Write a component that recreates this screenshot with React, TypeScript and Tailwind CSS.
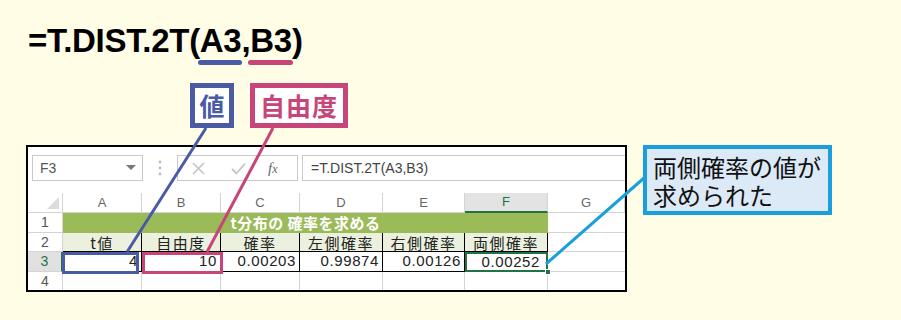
import React from "react";

const cols = ["A", "B", "C", "D", "E", "F", "G"];
const heads = ["t値", "自由度", "確率", "左側確率", "右側確率", "両側確率"];
const vals = ["4", "10", "0.00203", "0.99874", "0.00126", "0.00252"];

export default function App() {
  const jp = { fontFamily: '"Noto Sans CJK JP", "Noto Sans", sans-serif' };
  const cellFont = { fontFamily: '"Liberation Sans", "Noto Sans CJK JP", sans-serif' };
  return (
    <div
      className="relative w-[901px] h-[320px] overflow-hidden bg-[#fffde6]"
      style={{ fontFamily: '"Liberation Sans", "Noto Sans CJK JP", sans-serif' }}
    >
      {/* Title formula */}
      <div className="pl-[28px] pt-[23px] h-[58px] text-[33px] leading-[36px] font-bold text-black tracking-[-0.3px]">
        =T.DIST.2T(
        <span className="relative">
          A3
          <span className="absolute left-[-2px] right-[-1px] bottom-[-6px] h-[5px] rounded-full bg-[#4a5aa5]" />
        </span>
        ,
        <span className="relative">
          B3
          <span className="absolute left-[-2px] right-[-1px] bottom-[-6px] h-[5px] rounded-full bg-[#c8457a]" />
        </span>
        )
      </div>

      {/* Label boxes */}
      <div className="flex mt-[25px] ml-[190px] gap-[16px] h-[45px]" style={jp}>
        <div className="w-[44px] h-[45px] border-[5px] border-[#4a5aa5] bg-white flex items-center justify-center text-[25px] font-bold text-[#4a5aa5] leading-none">
          値
        </div>
        <div className="w-[98px] h-[45px] border-[5px] border-[#c8457a] bg-white flex items-center justify-center text-[25px] font-bold text-[#c8457a] leading-none tracking-[1px]">
          自由度
        </div>
      </div>

      {/* Spreadsheet + callout row */}
      <div className="flex mt-[17px] items-start">
        <div className="ml-[26px] w-[601px] h-[147px] border-2 border-black bg-white flex flex-col">
          {/* toolbar */}
          <div className="h-[46px] flex items-start pt-[8px]">
            <div className="ml-[4px] w-[111px] h-[26px] border border-[#c9c9c9] flex items-center justify-between pl-[7px] pr-[6px] text-[14px] text-[#555]">
              <span>F3</span>
              <svg width="10" height="6" viewBox="0 0 10 6">
                <path d="M0 0 L10 0 L5 5 Z" fill="#777" />
              </svg>
            </div>
            <div className="w-[34px] h-[26px] flex items-center justify-center">
              <svg width="4" height="16" viewBox="0 0 4 16">
                <circle cx="2" cy="2" r="1.4" fill="#bbb" />
                <circle cx="2" cy="8" r="1.4" fill="#bbb" />
                <circle cx="2" cy="14" r="1.4" fill="#bbb" />
              </svg>
            </div>
            <div className="w-[121px] h-[26px] border border-[#c9c9c9] flex items-center">
              <svg className="ml-[14px]" width="13" height="13" viewBox="0 0 13 13">
                <path d="M1 1 L12 12 M12 1 L1 12" stroke="#c4c4c4" strokeWidth="1.6" />
              </svg>
              <svg className="ml-[26px]" width="15" height="13" viewBox="0 0 15 13">
                <path d="M1 7 L5.5 11.5 L14 1.5" stroke="#c4c4c4" strokeWidth="1.8" fill="none" />
              </svg>
              <span
                className="ml-[22px] text-[15px] italic text-[#666]"
                style={{ fontFamily: '"Liberation Serif", serif' }}
              >
                f<span className="text-[12px]">x</span>
              </span>
            </div>
            <div className="ml-[4px] flex-1 h-[26px] border-y border-l border-[#c9c9c9] flex items-center pl-[8px] text-[14px] text-[#444]">
              =T.DIST.2T(A3,B3)
            </div>
          </div>

          {/* grid */}
          <div
            className="grid grid-cols-[35px_79px_79px_79px_83px_82px_83px_77px] grid-rows-[20px_20px_19px_20px_18px] text-[14px]"
            style={cellFont}
          >
            {/* header row */}
            <div className="relative border-r border-b border-[#d4d4d4] bg-white">
              <svg className="absolute right-[3px] bottom-[3px]" width="12" height="12" viewBox="0 0 12 12">
                <path d="M12 0 L12 12 L0 12 Z" fill="#dcdcdc" />
              </svg>
            </div>
            {cols.map((c) =>
              c === "F" ? (
                <div
                  key={c}
                  className="bg-[#e3e3e3] border-r border-[#d4d4d4] border-b-2 border-b-[#217346] flex items-center justify-center text-[13px] text-[#217346]"
                >
                  {c}
                </div>
              ) : (
                <div
                  key={c}
                  className="border-r border-b border-[#d4d4d4] flex items-center justify-center text-[13px] text-[#666]"
                >
                  {c}
                </div>
              )
            )}

            {/* row 1 */}
            <div className="border-r border-b border-[#d4d4d4] flex items-center justify-center text-[14px] text-[#555]">1</div>
            <div
              className="col-span-6 bg-[#9bbb59] flex items-center justify-center text-white font-bold text-[15px] tracking-[0.5px]"
              style={jp}
            >
              t分布の 確率を求める
            </div>
            <div className="border-b border-[#d4d4d4]" />

            {/* row 2 */}
            <div className="border-r border-b border-[#d4d4d4] flex items-center justify-center text-[14px] text-[#555]">2</div>
            {heads.map((h) => (
              <div
                key={h}
                className="bg-[#ebf1de] border-r border-b border-black flex items-center justify-center text-[15px] text-[#222] tracking-[1.5px] leading-none"
                style={jp}
              >
                {h}
              </div>
            ))}
            <div className="border-b border-[#d4d4d4]" />

            {/* row 3 */}
            <div className="bg-[#e1e1e1] border-r-2 border-r-[#217346] border-b border-[#d4d4d4] flex items-center justify-center text-[14px] text-[#217346]">3</div>
            {vals.map((v, i) =>
              i === 5 ? (
                <div
                  key={i}
                  className="relative border-2 border-[#217346] flex items-center justify-end pr-[6px] text-[15px] text-[#222] tracking-[0.6px]"
                >
                  {v}
                  <span className="absolute right-[-5px] bottom-[-5px] w-[6px] h-[6px] bg-[#217346] border border-white" />
                </div>
              ) : (
                <div
                  key={i}
                  className="border-r border-b border-black flex items-center justify-end pr-[3px] text-[15px] text-[#222] tracking-[0.6px]"
                >
                  {v}
                </div>
              )
            )}
            <div className="border-b border-[#d4d4d4]" />

            {/* row 4 */}
            <div className="border-r border-[#d4d4d4] flex items-center justify-center text-[14px] text-[#555]">4</div>
            {cols.map((c) => (
              <div key={c} className={c === "G" ? "" : "border-r border-[#d4d4d4]"} />
            ))}
          </div>
        </div>

        {/* callout */}
        <div
          className="ml-[16px] w-[189px] h-[70px] border-4 border-[#1a9fdc] bg-[#dce9f6] pl-[6px] pt-[4px] text-[24px] text-[#111] flex flex-col"
          style={jp}
        >
          <div className="h-[28px] leading-[28px]">両側確率の値が</div>
          <div className="h-[28px] leading-[28px]">求められた</div>
        </div>
      </div>

      {/* highlight boxes over A3 / B3 */}
      <div className="absolute left-[62px] top-[252px] w-[77px] h-[22px] border-[3px] border-[#4a5aa5] z-10" />
      <div className="absolute left-[142px] top-[252px] w-[81px] h-[22px] border-[3px] border-[#c8457a] z-10" />

      {/* leader lines */}
      <svg className="absolute inset-0 z-20 pointer-events-none" width="901" height="320" viewBox="0 0 901 320">
        <line x1="206" y1="128" x2="127" y2="252" stroke="#4a5aa5" strokeWidth="3" />
        <line x1="273" y1="128" x2="207" y2="252" stroke="#c8457a" strokeWidth="3" />
        <line x1="644" y1="178" x2="546" y2="264" stroke="#1a9fdc" strokeWidth="3" />
      </svg>
    </div>
  );
}
